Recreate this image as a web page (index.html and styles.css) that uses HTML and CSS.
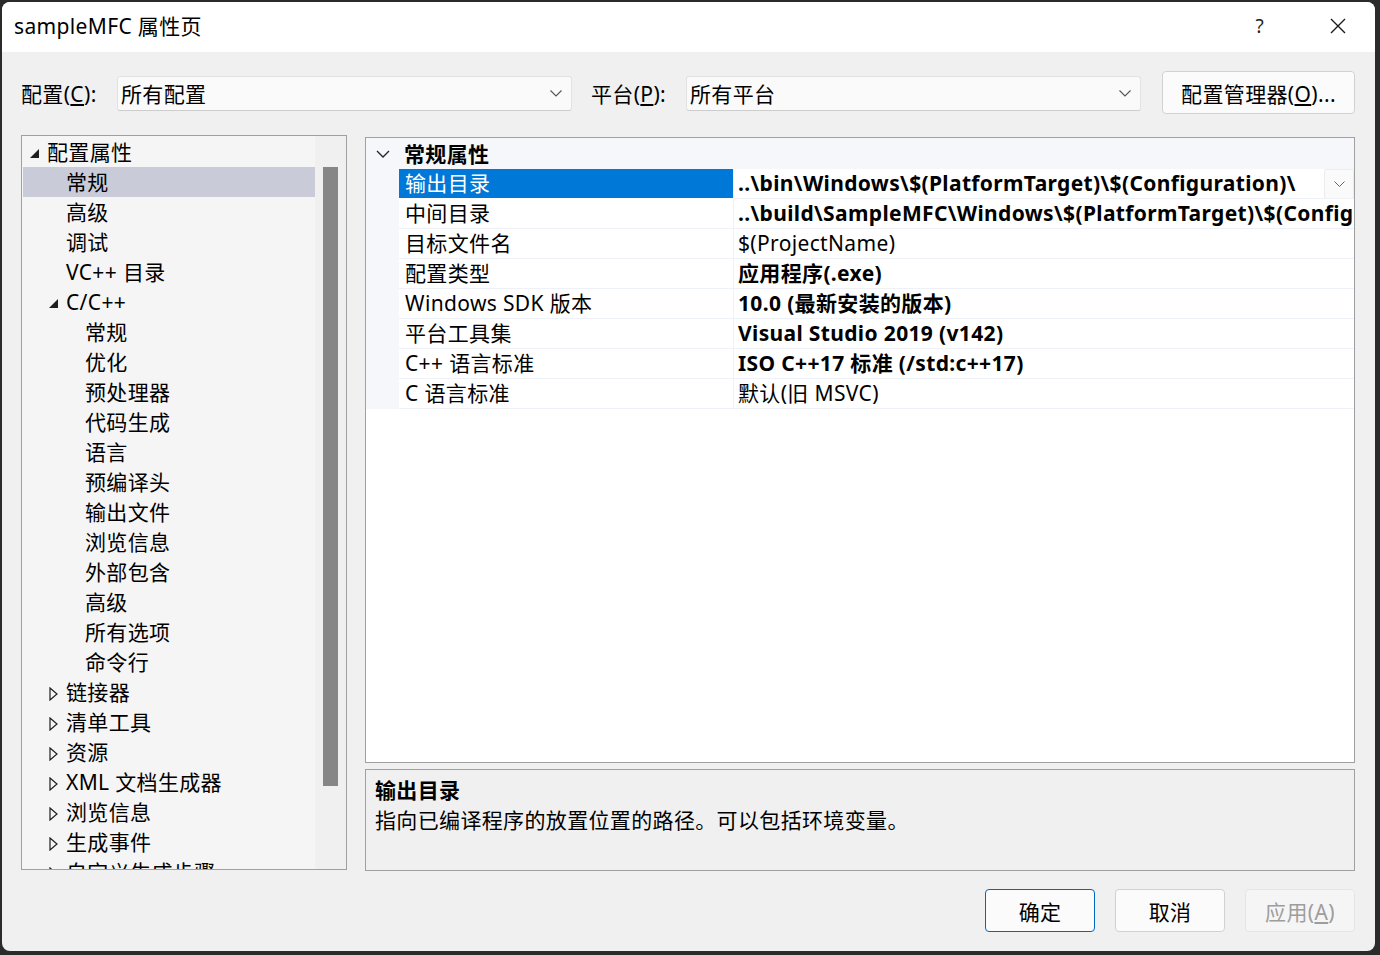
FILE: index.html
```html
<!DOCTYPE html>
<html lang="zh-CN">
<head>
  <meta charset="UTF-8" />
  <title>sampleMFC 属性页</title>
  <link rel="stylesheet" href="styles.css">
</head>
<body>
  <div class="window">
    <div class="titlebar">
      <span class="title">sampleMFC 属性页</span>
      <div class="title-btns">
        <span class="help">?</span>
        <svg class="close" width="16" height="16" viewBox="0 0 16 16">
          <path d="M1 1 L15 15 M15 1 L1 15" stroke="#1a1a1a" stroke-width="1.4" fill="none"/>
        </svg>
      </div>
    </div>

    <div class="content">
      <div class="config-row">
        <span class="lbl">配置(<u>C</u>):</span>
        <div class="combo">
          <span>所有配置</span>
          <svg class="chev" width="12" height="7" viewBox="0 0 12 7"><path d="M0.5 0.5 L6 6 L11.5 0.5" stroke="#555" stroke-width="1.1" fill="none"/></svg>
        </div>
        <span class="lbl lbl-platform">平台(<u>P</u>):</span>
        <div class="combo">
          <span>所有平台</span>
          <svg class="chev" width="12" height="7" viewBox="0 0 12 7"><path d="M0.5 0.5 L6 6 L11.5 0.5" stroke="#555" stroke-width="1.1" fill="none"/></svg>
        </div>
        <button class="btn btn-manager">配置管理器(<u>O</u>)...</button>
      </div>

      <div class="main">
        <div class="tree">
          <div class="tree-list">
            <div class="node lv0"><span class="tog"><svg width="9" height="9" viewBox="0 0 9 9"><path d="M9 0 L9 9 L0 9 Z" fill="#1e1e1e"/></svg></span>配置属性</div>
            <div class="node lv1 sel"><span class="tog"></span>常规</div>
            <div class="node lv1"><span class="tog"></span>高级</div>
            <div class="node lv1"><span class="tog"></span>调试</div>
            <div class="node lv1"><span class="tog"></span>VC++ 目录</div>
            <div class="node lv1"><span class="tog"><svg width="9" height="9" viewBox="0 0 9 9"><path d="M9 0 L9 9 L0 9 Z" fill="#1e1e1e"/></svg></span>C/C++</div>
            <div class="node lv2"><span class="tog"></span>常规</div>
            <div class="node lv2"><span class="tog"></span>优化</div>
            <div class="node lv2"><span class="tog"></span>预处理器</div>
            <div class="node lv2"><span class="tog"></span>代码生成</div>
            <div class="node lv2"><span class="tog"></span>语言</div>
            <div class="node lv2"><span class="tog"></span>预编译头</div>
            <div class="node lv2"><span class="tog"></span>输出文件</div>
            <div class="node lv2"><span class="tog"></span>浏览信息</div>
            <div class="node lv2"><span class="tog"></span>外部包含</div>
            <div class="node lv2"><span class="tog"></span>高级</div>
            <div class="node lv2"><span class="tog"></span>所有选项</div>
            <div class="node lv2"><span class="tog"></span>命令行</div>
            <div class="node lv1"><span class="tog"><svg width="9" height="14" viewBox="0 0 9 14"><path d="M1 1 L8 7 L1 13 Z" stroke="#1e1e1e" stroke-width="1.2" fill="none"/></svg></span>链接器</div>
            <div class="node lv1"><span class="tog"><svg width="9" height="14" viewBox="0 0 9 14"><path d="M1 1 L8 7 L1 13 Z" stroke="#1e1e1e" stroke-width="1.2" fill="none"/></svg></span>清单工具</div>
            <div class="node lv1"><span class="tog"><svg width="9" height="14" viewBox="0 0 9 14"><path d="M1 1 L8 7 L1 13 Z" stroke="#1e1e1e" stroke-width="1.2" fill="none"/></svg></span>资源</div>
            <div class="node lv1"><span class="tog"><svg width="9" height="14" viewBox="0 0 9 14"><path d="M1 1 L8 7 L1 13 Z" stroke="#1e1e1e" stroke-width="1.2" fill="none"/></svg></span>XML 文档生成器</div>
            <div class="node lv1"><span class="tog"><svg width="9" height="14" viewBox="0 0 9 14"><path d="M1 1 L8 7 L1 13 Z" stroke="#1e1e1e" stroke-width="1.2" fill="none"/></svg></span>浏览信息</div>
            <div class="node lv1"><span class="tog"><svg width="9" height="14" viewBox="0 0 9 14"><path d="M1 1 L8 7 L1 13 Z" stroke="#1e1e1e" stroke-width="1.2" fill="none"/></svg></span>生成事件</div>
            <div class="node lv1"><span class="tog"><svg width="9" height="14" viewBox="0 0 9 14"><path d="M1 1 L8 7 L1 13 Z" stroke="#1e1e1e" stroke-width="1.2" fill="none"/></svg></span>自定义生成步骤</div>
          </div>
          <div class="scrollbar"><div class="thumb"></div></div>
        </div>

        <div class="right">
          <div class="grid">
            <div class="cat">
              <span class="cat-tog"><svg width="14" height="8" viewBox="0 0 14 8"><path d="M1 1 L7 7 L13 1" stroke="#222" stroke-width="1.3" fill="none"/></svg></span>
              <span class="cat-name">常规属性</span>
            </div>
            <div class="prop sel">
              <div class="pname">输出目录</div>
              <div class="pval bold">..\bin\Windows\$(PlatformTarget)\$(Configuration)\
                <span class="dd"><svg width="11" height="6" viewBox="0 0 11 6"><path d="M0.5 0.5 L5.5 5.5 L10.5 0.5" stroke="#666" stroke-width="1" fill="none"/></svg></span>
              </div>
            </div>
            <div class="prop">
              <div class="pname">中间目录</div>
              <div class="pval bold">..\build\SampleMFC\Windows\$(PlatformTarget)\$(Configuration)\</div>
            </div>
            <div class="prop">
              <div class="pname">目标文件名</div>
              <div class="pval">$(ProjectName)</div>
            </div>
            <div class="prop">
              <div class="pname">配置类型</div>
              <div class="pval bold">应用程序(.exe)</div>
            </div>
            <div class="prop">
              <div class="pname">Windows SDK 版本</div>
              <div class="pval bold">10.0 (最新安装的版本)</div>
            </div>
            <div class="prop">
              <div class="pname">平台工具集</div>
              <div class="pval bold">Visual Studio 2019 (v142)</div>
            </div>
            <div class="prop">
              <div class="pname">C++ 语言标准</div>
              <div class="pval bold">ISO C++17 标准 (/std:c++17)</div>
            </div>
            <div class="prop">
              <div class="pname">C 语言标准</div>
              <div class="pval">默认(旧 MSVC)</div>
            </div>
          </div>

          <div class="desc">
            <div class="desc-title">输出目录</div>
            <div class="desc-text">指向已编译程序的放置位置的路径。可以包括环境变量。</div>
          </div>
        </div>
      </div>

      <div class="footer">
        <button class="btn btn-ok">确定</button>
        <button class="btn">取消</button>
        <button class="btn btn-disabled">应用(<u>A</u>)</button>
      </div>
    </div>
  </div>
</body>
</html>
```

FILE: styles.css
```css
html, body {
  margin: 0;
  background-color: #2b2b2b;
}
body {
  font-family: "Noto Sans", "Noto Sans CJK SC", sans-serif;
  font-size: 21px;
  letter-spacing: 0.35px;
  color: #000;
}
.window {
  margin: 2px 0 0 2px;
  width: 1373px;
  height: 949px;
  border-radius: 8px;
  background-color: #f0f0f0;
  overflow: hidden;
}

/* title bar */
.titlebar {
  height: 50px;
  background-color: #fff;
  display: flex;
  align-items: center;
  justify-content: space-between;
  padding-left: 12px;
}
.title {
  line-height: 30px;
  margin-top: -2px;
}
.title-btns {
  display: flex;
  align-items: center;
}
.help {
  font-size: 19px;
  color: #222;
  margin-right: 66px;
  margin-top: -3px;
}
.close {
  margin-right: 29px;
  margin-top: -2px;
}

/* config row */
.content {
  padding: 19px 20px 0 19px;
}
.config-row {
  display: flex;
  align-items: center;
  height: 43px;
}
.lbl {
  width: 96px;
  line-height: 30px;
  padding-top: 2px;
}
.lbl-platform {
  width: 95px;
  margin-left: 19px;
}
.combo {
  width: 441px;
  height: 33px;
  margin-top: 2px;
  background-color: #fafafa;
  border: 1px solid #e2e2e2;
  border-bottom-color: #cdcdcd;
  border-radius: 3px;
  display: flex;
  align-items: center;
  justify-content: space-between;
  padding: 0 9px 0 3px;
}
.combo span {
  line-height: 30px;
}
.btn {
  font-family: inherit;
  font-size: 21px;
  letter-spacing: 0.35px;
  color: #000;
  background-color: #fbfbfb;
  border: 1px solid #d1d1d1;
  border-radius: 4px;
  padding: 0;
  height: 43px;
  width: 110px;
}
.btn-manager {
  width: 193px;
  margin-left: 21px;
}

/* main area */
.main {
  display: flex;
  margin-top: 21px;
}
.tree {
  width: 324px;
  height: 733px;
  border: 1px solid #a0a0a0;
  background-color: #f5f5f5;
  display: flex;
  overflow: hidden;
}
.tree-list {
  width: 292px;
  padding: 1px 0 0 1px;
}
.node {
  height: 30px;
  line-height: 30px;
  white-space: nowrap;
  display: flex;
  align-items: center;
}
.node.sel {
  background-color: #c9cbd8;
}
.lv0 { padding-left: 7px; }
.lv1 { padding-left: 26px; }
.lv2 { padding-left: 45px; }
.tog {
  width: 17px;
  flex: none;
  display: flex;
  align-items: center;
  height: 30px;
}
.lv0 .tog svg,
.lv1 .tog svg {
  margin-top: 3px;
}
.scrollbar {
  width: 31px;
  background-color: #f0f0f0;
  padding-top: 31px;
}
.thumb {
  margin-left: 8px;
  width: 15px;
  height: 619px;
  background-color: #868686;
}

.right {
  margin-left: 18px;
  margin-top: 2px;
  width: 990px;
}
.grid {
  height: 624px;
  border: 1px solid #a0a0a0;
  background-color: #fff;
  overflow: hidden;
}
.cat {
  height: 31px;
  background-color: #f5f7fb;
  display: flex;
  align-items: center;
}
.cat-tog {
  width: 38px;
  padding-left: 10px;
  box-sizing: border-box;
  display: flex;
  align-items: center;
}
.cat-name {
  font-weight: bold;
  line-height: 30px;
}
.prop {
  display: flex;
  height: 30px;
  border-left: 33px solid #f5f7fb;
}
.pname {
  width: 328px;
  padding-left: 6px;
  line-height: 29px;
  border-bottom: 1px solid #eef1f8;
  border-right: 1px solid #eef1f8;
  white-space: nowrap;
}
.prop.sel .pname {
  background-color: #0078d7;
  color: #fff;
  border-bottom-color: #fff;
}
.pval {
  flex: 1;
  position: relative;
  padding-left: 4px;
  line-height: 29px;
  border-bottom: 1px solid #eef1f8;
  white-space: nowrap;
  overflow: hidden;
}
.bold {
  font-weight: bold;
}
.dd {
  position: absolute;
  right: 0;
  top: 0;
  width: 28px;
  height: 28px;
  background-color: #fafafa;
  border: 1px solid #ececec;
  border-radius: 2px;
  display: flex;
  align-items: center;
  justify-content: center;
}

.desc {
  margin-top: 6px;
  height: 95px;
  border: 1px solid #a0a0a0;
  background-color: #f0f0f0;
  padding: 5px 0 0 9px;
}
.desc-title {
  font-weight: bold;
  line-height: 30px;
}
.desc-text {
  line-height: 30px;
}

/* bottom buttons */
.footer {
  display: flex;
  justify-content: flex-end;
  gap: 20px;
  margin-top: 18px;
}
.btn-ok {
  border-color: #0067c0;
}
.btn-disabled {
  color: #9d9d9d;
  background-color: #f5f5f5;
  border-color: #e5e5e5;
}
```
